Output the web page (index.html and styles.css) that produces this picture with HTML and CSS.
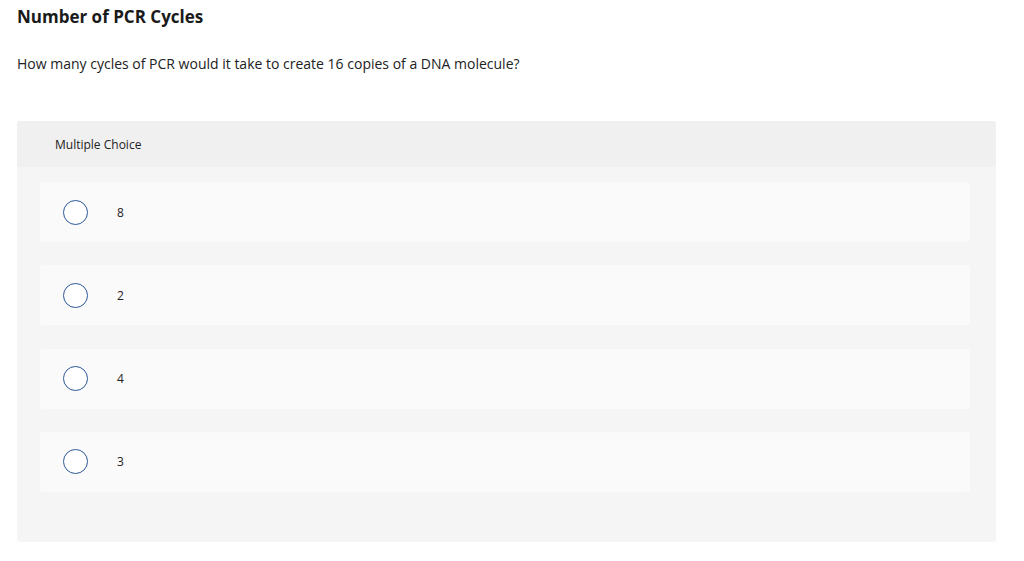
FILE: index.html
```html
<!DOCTYPE html>
<html>
<head>
<meta charset="utf-8">
<link rel="stylesheet" href="styles.css">
</head>
<body>
<div class="page">
  <h1 class="title">Number of PCR Cycles</h1>
  <p class="question">How many cycles of PCR would it take to create 16 copies of a DNA molecule?</p>
  <div class="panel">
    <div class="panel-head">Multiple Choice</div>
    <div class="options">
      <div class="option"><span class="radio"></span><span class="label">8</span></div>
      <div class="option"><span class="radio"></span><span class="label">2</span></div>
      <div class="option"><span class="radio"></span><span class="label">4</span></div>
      <div class="option"><span class="radio"></span><span class="label">3</span></div>
    </div>
  </div>
</div>
</body>
</html>
```
FILE: styles.css
```css
html, body {
  margin: 0;
  padding: 0;
  background: #ffffff;
}
body {
  font-family: "Open Sans", "Liberation Sans", sans-serif;
  color: #1a1a1a;
}
.page {
  padding: 7px 28px 0 17px;
}
.title {
  margin: 0;
  font-size: 17px;
  font-weight: 700;
  line-height: 20px;
  color: #1a1a1a;
}
.question {
  margin: 28px 0 0 0;
  font-size: 14px;
  line-height: 18px;
  color: #222;
}
.panel {
  margin-top: 48px;
  background: #f5f5f5;
  border-radius: 3px;
  overflow: hidden;
  height: 421px;
}
.panel-head {
  background: #f0f0f0;
  height: 46px;
  display: flex;
  align-items: center;
  padding-left: 38px;
  font-size: 12px;
  color: #222;
}
.options {
  display: flex;
  flex-direction: column;
  gap: 23.34px;
  padding: 15px 26px 0 23px;
}
.option {
  background: #fafafa;
  border-radius: 3px;
  height: 60px;
  display: flex;
  align-items: center;
  padding-left: 23px;
}
.radio {
  width: 23px;
  height: 23px;
  border: 1px solid #2b5797;
  border-radius: 50%;
  background: #fff;
  box-sizing: content-box;
  flex: none;
}
.label {
  margin-left: 29px;
  font-size: 12px;
  color: #222;
}
```
